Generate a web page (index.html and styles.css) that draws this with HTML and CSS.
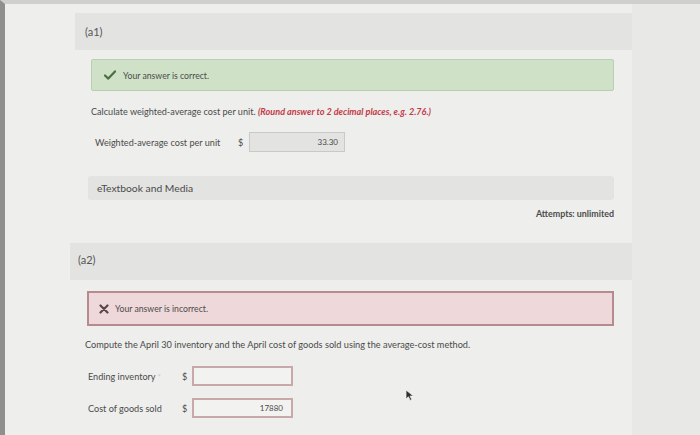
FILE: index.html
```html
<!DOCTYPE html>
<html>
<head>
<meta charset="utf-8">
<link rel="stylesheet" href="styles.css">
</head>
<body>
<div class="screen">
  <div class="main">
    <section class="part part-a1">
      <div class="part-head">(a1)</div>
      <div class="part-body">
        <div class="alert alert-ok">
          <svg class="ico" width="12" height="10" viewBox="0 0 12 10"><path d="M1 5.5 L4.3 8.6 L11 1.4" fill="none" stroke="#4d6b45" stroke-width="2.2" stroke-linecap="round" stroke-linejoin="round"/></svg>
          <span>Your answer is correct.</span>
        </div>
        <p class="q">Calculate weighted-average cost per unit. <em class="hint">(Round answer to 2 decimal places, e.g. 2.76.)</em></p>
        <div class="row row-a1">
          <span class="lbl">Weighted-average cost per unit</span>
          <span class="cur">$</span>
          <span class="inp inp-done">33.30</span>
        </div>
        <div class="etext">eTextbook and Media</div>
        <div class="attempts">Attempts: unlimited</div>
      </div>
    </section>
    <section class="part part-a2">
      <div class="part-head">(a2)</div>
      <div class="part-body">
        <div class="alert alert-bad">
          <svg class="ico" width="10" height="10" viewBox="0 0 10 10"><path d="M1.5 1.5 L8.5 8.5 M8.5 1.5 L1.5 8.5" fill="none" stroke="#5a4848" stroke-width="2.2" stroke-linecap="round"/></svg>
          <span>Your answer is incorrect.</span>
        </div>
        <p class="q q2">Compute the April 30 inventory and the April cost of goods sold using the average-cost method.</p>
        <div class="row row-a2 row-first">
          <span class="lbl">Ending inventory <span class="req">*</span></span>
          <span class="cur">$</span>
          <span class="inp inp-bad"></span>
        </div>
        <div class="row row-a2 row-next">
          <span class="lbl">Cost of goods sold</span>
          <span class="cur">$</span>
          <span class="inp inp-bad">17880</span>
        </div>
      </div>
    </section>
  </div>
  <div class="side"></div>
</div>
<svg class="cursor" width="10" height="12" viewBox="0 0 10 12"><path d="M1 1 L1 10 L3.4 7.8 L5.2 11.4 L6.8 10.6 L5.1 7.1 L8.4 7 Z" fill="#2e2e2e" stroke="#f0f0f0" stroke-width="0.8"/></svg>
</body>
</html>
```
FILE: styles.css
```css
* { box-sizing: border-box; }
html, body { margin: 0; padding: 0; }
body {
  position: relative;
  width: 700px;
  height: 435px;
  overflow: hidden;
  background: #e6e6e4;
  font-family: Lato, "Open Sans", sans-serif;
  color: #4b4b4b;
}
.screen {
  display: flex;
  height: 435px;
  border-left: 5px solid #8f8f8d;
  border-top: 4px solid #cfcfcd;
}
.main {
  width: 627px;
  background: #eeeeec;
  padding-top: 9px;
}
.side {
  flex: 1;
  background: #e8e8e6;
}
.part-a1 { margin-left: 70px; }
.part-a2 { margin-left: 65px; margin-top: 24px; }
.part-head {
  background: #e3e3e1;
  height: 37px;
  font-size: 11px;
  padding: 12px 0 0 10px;
  color: #555;
}
.part-a2 .part-head { padding-left: 8px; padding-top: 10px; }
.part-body { padding: 9px 18px 0 16px; }
.part-a2 .part-body { padding: 11px 18px 0 17px; }
.alert {
  display: flex;
  align-items: center;
  height: 32px;
  font-size: 8.7px;
  padding-left: 12px;
  gap: 7px;
}
.alert-ok {
  background: #cfe2c7;
  border: 1px solid #b9cfb2;
  border-radius: 2px;
}
.alert-bad {
  background: #efd8d9;
  border: 2px solid #b58b8f;
  height: 35px;
  padding-left: 10px;
  gap: 6px;
}
.q {
  margin: 15px 0 0 0;
  font-size: 9.1px;
  color: #4a4a4a;
}
.hint {
  color: #c23a48;
  font-weight: bold;
  font-style: italic;
}
.q2 { margin: 13px 0 0 -2px; font-size: 9.2px; }
.row {
  display: flex;
  align-items: center;
  font-size: 9.1px;
}
.row-a1 { margin: 15px 0 0 4px; height: 20px; }
.row-a1 .lbl { width: 143px; }
.row-a1 .cur { width: 11px; }
.inp {
  height: 20px;
  display: flex;
  align-items: center;
  justify-content: flex-end;
  font-size: 8px;
}
.inp-done {
  width: 96px;
  background: #e3e3e1;
  border: 1px solid #c9c9c7;
  padding-right: 6px;
}
.etext {
  margin: 24px 0 0 -3px;
  height: 24px;
  background: #e3e3e1;
  border-radius: 3px;
  font-size: 10.3px;
  display: flex;
  align-items: center;
  padding-left: 9px;
}
.attempts {
  text-align: right;
  font-weight: bold;
  font-size: 8.9px;
  margin-top: 8px;
}
.row-a2 { margin-left: 1px; height: 20px; }
.row-first { margin-top: 16px; }
.row-next { margin-top: 12px; }
.row-a2 .lbl { width: 94px; }
.row-a2 .cur { width: 10px; }
.req { color: #c9c9c7; font-size: 7px; }
.inp-bad {
  width: 101px;
  background: #f2f2f0;
  border: 2px solid #c9a8a9;
  padding-right: 8px;
}
.cursor {
  position: absolute;
  left: 405px;
  top: 389px;
}
```
